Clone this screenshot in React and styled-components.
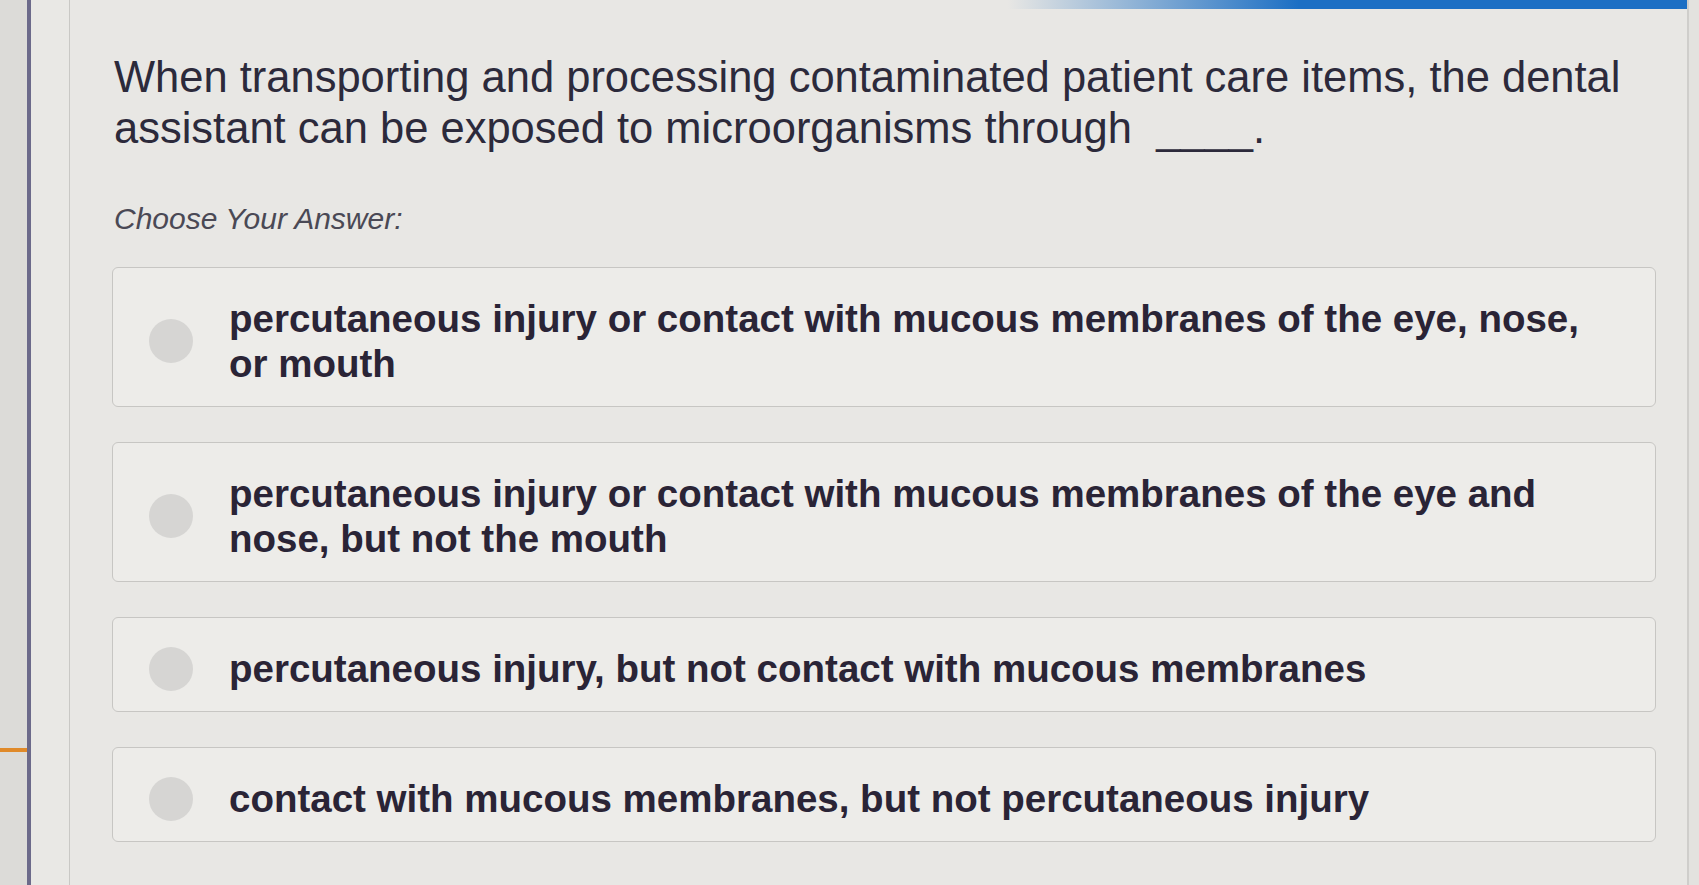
import styled, { createGlobalStyle } from 'styled-components';

const GlobalStyle = createGlobalStyle`
  html, body {
    margin: 0;
    padding: 0;
    background: #e3e2df;
  }
  * {
    box-sizing: border-box;
  }
`;

const Page = styled.div`
  display: flex;
  min-height: 100vh;
  font-family: "Liberation Sans", Arial, sans-serif;
  overflow: hidden;
`;

const SideRail = styled.div`
  width: 27px;
  flex-shrink: 0;
  background: #dcdbd8;
  padding-top: 748px;
`;

const RailMarker = styled.div`
  height: 4px;
  background: #e08a2a;
`;

const RailEdge = styled.div`
  width: 4px;
  flex-shrink: 0;
  background: #6c6a8a;
`;

const Gutter = styled.div`
  width: 39px;
  flex-shrink: 0;
  background: #e9e8e5;
  border-right: 1px solid #c9c8c5;
`;

const Main = styled.main`
  flex: 1;
  display: flex;
  flex-direction: column;
  background: #e8e7e4;
  border-right: 2px solid #cfcecb;
  margin-right: 10px;
`;

const TopBar = styled.div`
  height: 9px;
  background: linear-gradient(to right, rgba(28, 111, 196, 0) 58%, #1c6fc4 76%);
`;

const Content = styled.div`
  padding: 43px 31px 40px 42px;
`;

const Question = styled.h1`
  margin: 0;
  padding-left: 2px;
  font-size: 43.5px;
  line-height: 51px;
  font-weight: 400;
  color: #2c2a3b;
  max-width: 1560px;
`;

const Prompt = styled.div`
  margin-top: 47px;
  padding-left: 2px;
  font-size: 30px;
  line-height: 36px;
  font-style: italic;
  color: #4a4955;
`;

const Choices = styled.div`
  margin-top: 30px;
  display: flex;
  flex-direction: column;
  gap: 35px;
`;

const Choice = styled.label`
  display: flex;
  align-items: center;
  gap: 36px;
  padding: 28px 54px 20px 36px;
  background: #edece9;
  border: 1px solid #c7c6c3;
  border-radius: 6px;
  cursor: pointer;
`;

const Radio = styled.span`
  width: 44px;
  height: 44px;
  flex-shrink: 0;
  border-radius: 50%;
  background: #d6d5d3;
`;

const ChoiceText = styled.span`
  font-size: 38.5px;
  line-height: 45px;
  font-weight: 700;
  color: #2a2436;
`;

const question =
  'When transporting and processing contaminated patient care items, the dental assistant can be exposed to microorganisms through\u00a0\u00a0____.';

const answers = [
  'percutaneous injury or contact with mucous membranes of the eye, nose, or mouth',
  'percutaneous injury or contact with mucous membranes of the eye and nose, but not the mouth',
  'percutaneous injury, but not contact with mucous membranes',
  'contact with mucous membranes, but not percutaneous injury',
];

const App = () => {
  return (
    <Page>
      <GlobalStyle />
      <SideRail>
        <RailMarker />
      </SideRail>
      <RailEdge />
      <Gutter />
      <Main>
        <TopBar />
        <Content>
          <Question>{question}</Question>
          <Prompt>Choose Your Answer:</Prompt>
          <Choices>
            {answers.map((text) => (
              <Choice key={text}>
                <Radio />
                <ChoiceText>{text}</ChoiceText>
              </Choice>
            ))}
          </Choices>
        </Content>
      </Main>
    </Page>
  );
};

export default App;
